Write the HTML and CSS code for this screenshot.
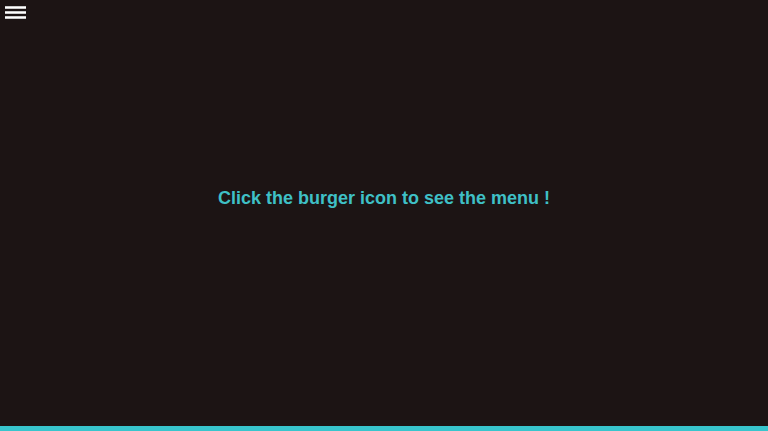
FILE: index.html
```html
<!DOCTYPE html>
<html>
<head>
<meta charset="utf-8">
<link rel="stylesheet" href="styles.css">
</head>
<body>
<div class="page">
  <header class="topbar">
    <button class="burger" aria-label="menu">
      <span class="line"></span>
      <span class="line"></span>
      <span class="line"></span>
    </button>
  </header>
  <main class="content">
    <p class="hint">Click the burger icon to see the menu !</p>
  </main>
  <footer class="bottom-bar"></footer>
</div>
</body>
</html>
```

FILE: styles.css
```css
html, body {
  margin: 0;
  padding: 0;
  height: 100%;
  background: #1c1414;
}
.page {
  height: 100%;
  display: flex;
  flex-direction: column;
}
.topbar {
  height: 0;
  position: relative;
}
.burger {
  position: absolute;
  left: 5px;
  top: 6px;
  width: 21px;
  padding: 0;
  border: 0;
  background: none;
  display: flex;
  flex-direction: column;
  gap: 2px;
}
.line {
  display: block;
  height: 3px;
  background: linear-gradient(#9a9a9a, #ffffff 35%, #ffffff 65%, #9a9a9a);
}
.content {
  flex: 1;
  display: flex;
  align-items: flex-start;
  justify-content: center;
  padding-top: 188px;
}
.hint {
  margin: 0;
  font-family: "Liberation Sans", Arial, sans-serif;
  font-weight: bold;
  font-size: 18px;
  line-height: 21px;
  color: #3fc0c6;
}
.bottom-bar {
  height: 5px;
  background: #38c5cd;
}
```
